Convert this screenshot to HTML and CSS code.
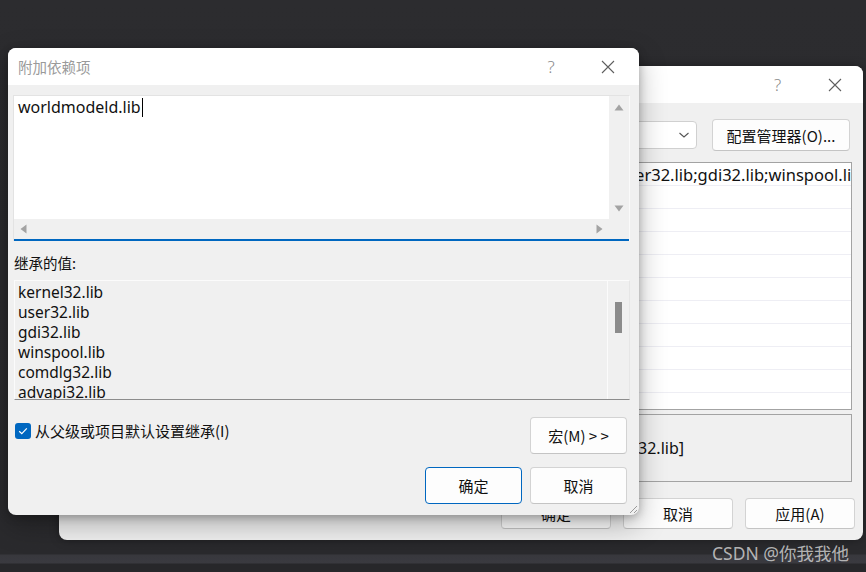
FILE: index.html
```html
<!DOCTYPE html>
<html lang="zh-CN">
<head>
<meta charset="utf-8">
<title>附加依赖项</title>
<link rel="stylesheet" href="styles.css">
</head>
<body>
<div class="desktop">

  <div class="window back">
    <div class="titlebar">
      <span class="title"></span>
      <span class="tb-help">?</span>
      <span class="tb-close"><svg width="14" height="14" viewBox="0 0 14 14"><path d="M1 1 L13 13 M13 1 L1 13" stroke="#5f5f5f" stroke-width="1.1" fill="none"/></svg></span>
    </div>
    <div class="back-body">
      <div class="config-row">
        <div class="combo"><svg width="12" height="8" viewBox="0 0 12 8"><path d="M1.5 2 L6 6 L10.5 2" stroke="#555" stroke-width="1.1" fill="none"/></svg></div>
        <button class="btn btn-config">配置管理器(O)...</button>
      </div>
      <div class="prop-grid">
        <div class="prop-row"><span class="prop-name">附加依赖项</span><span class="prop-value">user32.lib;gdi32.lib;winspool.lib</span></div>
        <div class="prop-row"><span class="prop-name"></span><span class="prop-value"></span></div>
        <div class="prop-row"><span class="prop-name"></span><span class="prop-value"></span></div>
        <div class="prop-row"><span class="prop-name"></span><span class="prop-value"></span></div>
        <div class="prop-row"><span class="prop-name"></span><span class="prop-value"></span></div>
        <div class="prop-row"><span class="prop-name"></span><span class="prop-value"></span></div>
        <div class="prop-row"><span class="prop-name"></span><span class="prop-value"></span></div>
        <div class="prop-row"><span class="prop-name"></span><span class="prop-value"></span></div>
        <div class="prop-row"><span class="prop-name"></span><span class="prop-value"></span></div>
        <div class="prop-row"><span class="prop-name"></span><span class="prop-value"></span></div>
      </div>
      <div class="desc">
        <p class="desc-line">odbc32.lib]</p>
      </div>
      <div class="back-buttons">
        <button class="btn btn-wide">确定</button>
        <button class="btn btn-wide">取消</button>
        <button class="btn btn-wide">应用(A)</button>
      </div>
    </div>
  </div>

  <div class="window front">
    <div class="titlebar front-title">
      <span class="title">附加依赖项</span>
      <span class="tb-help f-help">?</span>
      <span class="tb-close f-close"><svg width="14" height="14" viewBox="0 0 14 14"><path d="M1 1 L13 13 M13 1 L1 13" stroke="#5f5f5f" stroke-width="1.1" fill="none"/></svg></span>
    </div>
    <div class="front-body">
      <div class="edit">
        <div class="edit-text">worldmodeld.lib<span class="caret"></span></div>
        <div class="vscroll">
          <svg width="10" height="7" viewBox="0 0 10 7"><path d="M5 0.5 L9.5 6.5 L0.5 6.5 Z" fill="#a3a3a3"/></svg>
          <svg width="10" height="7" viewBox="0 0 10 7"><path d="M0.5 0.5 L9.5 0.5 L5 6.5 Z" fill="#a3a3a3"/></svg>
        </div>
        <div class="hscroll">
          <svg width="7" height="10" viewBox="0 0 7 10"><path d="M6.5 0.5 L6.5 9.5 L0.5 5 Z" fill="#a3a3a3"/></svg>
          <svg width="7" height="10" viewBox="0 0 7 10"><path d="M0.5 0.5 L6.5 5 L0.5 9.5 Z" fill="#a3a3a3"/></svg>
        </div>
        <div class="corner"></div>
      </div>

      <div class="label">继承的值:</div>
      <div class="inherit">
        <ul class="inherit-list">
          <li>kernel32.lib</li>
          <li>user32.lib</li>
          <li>gdi32.lib</li>
          <li>winspool.lib</li>
          <li>comdlg32.lib</li>
          <li>advapi32.lib</li>
        </ul>
        <div class="inherit-scroll"><span class="thumb"></span></div>
      </div>

      <div class="option-row">
        <label class="check">
          <span class="box"><svg width="10" height="8" viewBox="0 0 10 8"><path d="M1.2 4.2 L3.8 6.6 L8.8 1.4" stroke="#fff" stroke-width="1.2" fill="none"/></svg></span>
          <span>从父级或项目默认设置继承(I)</span>
        </label>
        <button class="btn btn-front">宏(M) &gt; &gt;</button>
      </div>
      <div class="front-buttons">
        <button class="btn btn-front btn-default">确定</button>
        <button class="btn btn-front">取消</button>
      </div>
    </div>
    <svg class="grip" width="10" height="10" viewBox="0 0 10 10"><path d="M9 2 L2 9 M9 6 L6 9" stroke="#9a9a9a" stroke-width="1" fill="none"/></svg>
  </div>

  <div class="watermark">CSDN @你我我他</div>
</div>
</body>
</html>
```
FILE: styles.css
```css
* { box-sizing: border-box; }
html, body { margin: 0; padding: 0; }
body {
  width: 866px;
  height: 572px;
  overflow: hidden;
  font-family: "Segoe UI", "Noto Sans", "Noto Sans CJK SC", sans-serif;
  font-size: 15.5px;
  color: #111;
}
.desktop {
  position: relative;
  width: 866px;
  height: 572px;
  background: linear-gradient(to bottom, #2c2c2f 0, #2a2a2d 554px, #38383d 555px, #3a3a40 563px, #27272a 564px, #27272a 100%);
}
.window {
  position: absolute;
  border-radius: 8px;
  background: #f0f0f0;
  overflow: hidden;
}
.back {
  left: 59px;
  top: 66px;
  width: 804px;
  height: 474px;
  box-shadow: 0 0 10px rgba(0,0,0,0.35);
}
.front {
  left: 8px;
  top: 48px;
  width: 631px;
  height: 467px;
  box-shadow: 0 10px 28px rgba(0,0,0,0.28), 0 2px 8px rgba(0,0,0,0.25);
}
.titlebar {
  height: 37px;
  background: #fff;
  display: flex;
  align-items: center;
}
.title {
  flex: 1;
  padding-left: 10px;
  padding-bottom: 1px;
  color: #9a9a9a;
  font-family: "Noto Sans CJK SC", sans-serif;
  font-size: 14.5px;
}
.tb-help, .tb-close {
  height: 37px;
  display: flex;
  align-items: center;
  justify-content: center;
}
.tb-help {
  width: 57px;
  color: #8a8a8a;
  font-family: "Noto Sans", sans-serif;
  font-weight: 300;
  font-size: 17px;
}
.tb-close { width: 57px; }
.f-help { width: 52px; }
.f-close { width: 62px; }

.btn {
  font-family: "Noto Sans CJK SC", sans-serif;
  font-size: 15px;
  color: #111;
  background: #fdfdfd;
  border: 1px solid #d3d3d3;
  border-bottom-color: #c4c4c4;
  border-radius: 4px;
  padding: 0;
  display: flex;
  align-items: center;
  justify-content: center;
}

/* back dialog */
.back-body {
  padding: 16px 11px 0 0;
  display: flex;
  flex-direction: column;
}
.config-row {
  display: flex;
  align-items: center;
  gap: 15px;
  padding-right: 2px;
}
.combo {
  width: 638px;
  height: 28px;
  background: #fff;
  border: 1px solid #d0d0d0;
  border-radius: 4px;
  display: flex;
  align-items: center;
  justify-content: flex-end;
  padding-right: 6px;
}
.btn-config {
  width: 138px;
  height: 32px;
}
.prop-grid {
  margin-top: 11px;
  height: 248px;
  background: #fff;
  border: 1px solid #a3a3a3;
  overflow: hidden;
}
.prop-row {
  display: flex;
  height: 23px;
  border-bottom: 1px solid #eeeef4;
}
.prop-name { width: 555px; flex: none; color: transparent; }
.prop-value {
  flex: 1;
  white-space: nowrap;
  overflow: hidden;
  padding-left: 2px;
  line-height: 24px;
  font-size: 16.5px;
}
.desc {
  margin-top: 4px;
  height: 68px;
  border: 1px solid #a3a3a3;
  background: #f0f0f0;
  padding-left: 541px;
  display: flex;
  align-items: center;
}
.desc-line {
  margin: 0;
  white-space: nowrap;
  font-size: 16px;
}
.back-buttons {
  margin-top: 16px;
  display: flex;
  justify-content: flex-end;
  gap: 12px;
  margin-right: -3px;
}
.btn-wide { width: 110px; height: 31px; }

/* front dialog */
.front-body {
  padding: 10px 9px 0 5px;
  display: flex;
  flex-direction: column;
}
.edit {
  display: grid;
  grid-template-columns: 1fr 20px;
  grid-template-rows: 123px 19px;
  border: 1px solid #e3e3e3;
  border-right-color: #fafafa;
  border-bottom: 0;
  background: #f0f0f0;
  position: relative;
  box-shadow: inset 0 -2px 0 #0067c0;
  padding-bottom: 3px;
}
.edit-text {
  background: #fff;
  padding: 1px 0 0 4px;
  line-height: 20px;
  font-size: 16px;
}
.caret {
  display: inline-block;
  width: 1px;
  height: 19px;
  background: #000;
  vertical-align: -4px;
  margin-left: 1px;
}
.vscroll {
  display: flex;
  flex-direction: column;
  justify-content: space-between;
  align-items: center;
  padding: 8px 0 7px;
}
.hscroll {
  display: flex;
  justify-content: space-between;
  align-items: center;
  padding: 0 6px 0 6px;
}
.corner { background: #f0f0f0; }

.label {
  margin-top: 12px;
  padding-left: 1px;
  font-family: "Noto Sans CJK SC", sans-serif;
  font-size: 14.5px;
  line-height: 20px;
}
.inherit {
  margin-top: 7px;
  margin-left: 1px;
  height: 120px;
  display: flex;
  border-top: 1px solid #fbfbfb;
  border-left: 1px solid #fbfbfb;
  border-right: 1px solid #e6e6e6;
  border-bottom: 1px solid #8c8c8c;
  overflow: hidden;
}
.inherit-list {
  flex: 1;
  list-style: none;
  margin: 0;
  padding: 1px 0 0 3px;
  border-right: 1px solid #fbfbfb;
}
.inherit-list li {
  height: 20px;
  line-height: 20px;
  white-space: nowrap;
}
.inherit-scroll {
  width: 21px;
  padding-top: 21px;
  display: flex;
  justify-content: center;
}
.thumb {
  width: 7px;
  height: 31px;
  background: #8b8b8b;
}

.option-row {
  margin-top: 17px;
  display: flex;
  justify-content: space-between;
  align-items: flex-start;
}
.check {
  display: flex;
  align-items: center;
  gap: 4px;
  margin-top: 3px;
  margin-left: 2px;
  font-family: "Noto Sans CJK SC", sans-serif;
  font-size: 15px;
}
.box {
  width: 16px;
  height: 16px;
  border-radius: 3px;
  background: #0067c0;
  display: flex;
  align-items: center;
  justify-content: center;
}
.btn-front { width: 97px; height: 37px; }
.option-row .btn-front { margin-right: 3px; }
.front-buttons {
  margin-top: 13px;
  display: flex;
  justify-content: flex-end;
  gap: 8px;
  margin-right: 3px;
}
.btn-default {
  border: 1px solid #0067c0;
}
.grip {
  position: absolute;
  right: 1px;
  bottom: 1px;
}

.watermark {
  position: absolute;
  left: 712px;
  top: 540px;
  font-family: "Noto Sans", "Noto Sans CJK SC", sans-serif;
  font-size: 17.5px;
  color: rgba(215,215,215,0.8);
  white-space: nowrap;
}
```
